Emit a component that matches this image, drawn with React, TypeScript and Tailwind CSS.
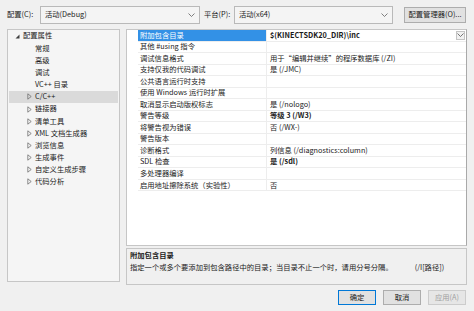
import React from "react";

const Chevron = ({ c = "#606060" }: { c?: string }) => (
  <svg width="7" height="4" viewBox="0 0 7 4">
    <polyline points="0.5,0.5 3.5,3.5 6.5,0.5" fill="none" stroke={c} strokeWidth="0.8" />
  </svg>
);

const ExpTri = () => (
  <svg width="5" height="5" viewBox="0 0 5 5">
    <polygon points="4.5,0.5 4.5,4.5 0.5,4.5" fill="#404040" />
  </svg>
);

const ColTri = () => (
  <svg width="5" height="7" viewBox="0 0 5 7">
    <polygon points="0.8,0.8 4.2,3.5 0.8,6.2" fill="none" stroke="#707070" strokeWidth="0.8" />
  </svg>
);

type TreeItem = { t: string; lvl: number; exp?: boolean; arrow?: boolean; sel?: boolean };

const tree: TreeItem[] = [
  { t: "配置属性", lvl: 0, exp: true },
  { t: "常规", lvl: 1 },
  { t: "高级", lvl: 1 },
  { t: "调试", lvl: 1 },
  { t: "VC++ 目录", lvl: 1 },
  { t: "C/C++", lvl: 1, arrow: true, sel: true },
  { t: "链接器", lvl: 1, arrow: true },
  { t: "清单工具", lvl: 1, arrow: true },
  { t: "XML 文档生成器", lvl: 1, arrow: true },
  { t: "浏览信息", lvl: 1, arrow: true },
  { t: "生成事件", lvl: 1, arrow: true },
  { t: "自定义生成步骤", lvl: 1, arrow: true },
  { t: "代码分析", lvl: 1, arrow: true },
];

type Prop = { n: string; v?: string; b?: boolean; sel?: boolean };

const props: Prop[] = [
  { n: "附加包含目录", v: "$(KINECTSDK20_DIR)\\inc", b: true, sel: true },
  { n: "其他 #using 指令" },
  { n: "调试信息格式", v: "用于“编辑并继续”的程序数据库 (/ZI)" },
  { n: "支持仅我的代码调试", v: "是 (/JMC)" },
  { n: "公共语言运行时支持" },
  { n: "使用 Windows 运行时扩展" },
  { n: "取消显示启动版权标志", v: "是 (/nologo)" },
  { n: "警告等级", v: "等级 3 (/W3)", b: true },
  { n: "将警告视为错误", v: "否 (/WX-)" },
  { n: "警告版本" },
  { n: "诊断格式", v: "列信息 (/diagnostics:column)" },
  { n: "SDL 检查", v: "是 (/sdl)", b: true },
  { n: "多处理器编译" },
  { n: "启用地址擦除系统（实验性）", v: "否" },
];

export default function App() {
  return (
    <div className="w-[474px] h-[311px] bg-[#f0f0f0] text-[#1a1a1a] font-['Noto_Sans_CJK_SC',sans-serif] text-[7.3px] leading-none flex flex-col overflow-hidden">
      {/* top bar */}
      <div className="flex items-center pl-[7px] pr-[8px] pt-[6px] h-[24px]">
        <div className="w-[33px]">配置(C):</div>
        <div className="w-[160px] h-[18px] border border-[#b9b9b9] bg-[#f4f4f4] flex items-center pl-[4px] pr-[4px]">
          <span>活动(Debug)</span>
          <span className="ml-auto"><Chevron /></span>
        </div>
        <div className="ml-[4px] w-[30px]">平台(P):</div>
        <div className="w-[159px] h-[18px] border border-[#b9b9b9] bg-[#f4f4f4] flex items-center pl-[4px] pr-[4px]">
          <span>活动(x64)</span>
          <span className="ml-auto"><Chevron /></span>
        </div>
        <div className="ml-auto w-[62px] h-[16px] border border-[#adadad] bg-[#e1e1e1] flex items-center justify-center">
          配置管理器(O)...
        </div>
      </div>

      {/* main */}
      <div className="flex pl-[7px] pr-[7px] mt-[5px] gap-[6px]">
        {/* tree */}
        <div className="w-[113px] h-[253px] border border-[#c6c6c6] bg-[#f5f5f5] flex flex-col pt-[0px] px-px">
          {tree.map((it, i) => (
            <div
              key={i}
              className={`h-[12.17px] flex items-center ${it.lvl === 0 ? "pl-[6px]" : "pl-[18px]"} ${it.sel ? "bg-[#dadada]" : ""}`}
            >
              <span className="w-[5px] mr-[3px] flex items-center">
                {it.exp ? <ExpTri /> : it.arrow ? <ColTri /> : null}
              </span>
              <span>{it.t}</span>
            </div>
          ))}
        </div>

        {/* right column */}
        <div className="flex-1 flex flex-col gap-[2px]">
          <div className="h-[217px] border border-[#c6c6c6] border-r-[#a9a9a9] bg-white flex flex-col">
            {props.map((p, i) => (
              <div key={i} className="h-[11.54px] flex">
                <div className="w-[11px] shrink-0" />
                <div
                  className={`w-[129px] shrink-0 flex items-center pl-[2px] border-b border-r border-[#ededed] ${p.sel ? "bg-[#3391e6] text-white" : ""}`}
                >
                  {p.n}
                </div>
                <div className={`flex-1 flex items-center pl-[3px] border-b border-[#ededed] ${p.b ? "font-bold" : ""}`}>
                  <span>{p.v ?? ""}</span>
                  {p.sel && (
                    <span className="ml-auto mr-[1px] w-[9px] h-[9px] border border-[#c4c4c4] bg-[#f0f0f0] flex items-center justify-center">
                      <Chevron c="#555" />
                    </span>
                  )}
                </div>
              </div>
            ))}
          </div>
          <div className="h-[37px] border border-[#c6c6c6] bg-[#f0f0f0] flex flex-col pl-[3px] pt-[3px] gap-[5px]">
            <div className="font-bold">附加包含目录</div>
            <div className="flex">
              <span>指定一个或多个要添加到包含路径中的目录；当目录不止一个时，请用分号分隔。</span>
              <span className="ml-[22px]">(/I[路径])</span>
            </div>
          </div>
        </div>
      </div>

      {/* bottom buttons */}
      <div className="flex justify-end items-center pr-[8px] mt-[5px] gap-[7px]">
        <div className="w-[38px] h-[15px] border border-[#0078d7] bg-[#e1e1e1] flex items-center justify-center">确定</div>
        <div className="w-[38px] h-[15px] border border-[#adadad] bg-[#e1e1e1] flex items-center justify-center">取消</div>
        <div className="w-[38px] h-[15px] border border-[#cccccc] bg-[#e6e6e6] text-[#a0a0a0] flex items-center justify-center">应用(A)</div>
      </div>
    </div>
  );
}
